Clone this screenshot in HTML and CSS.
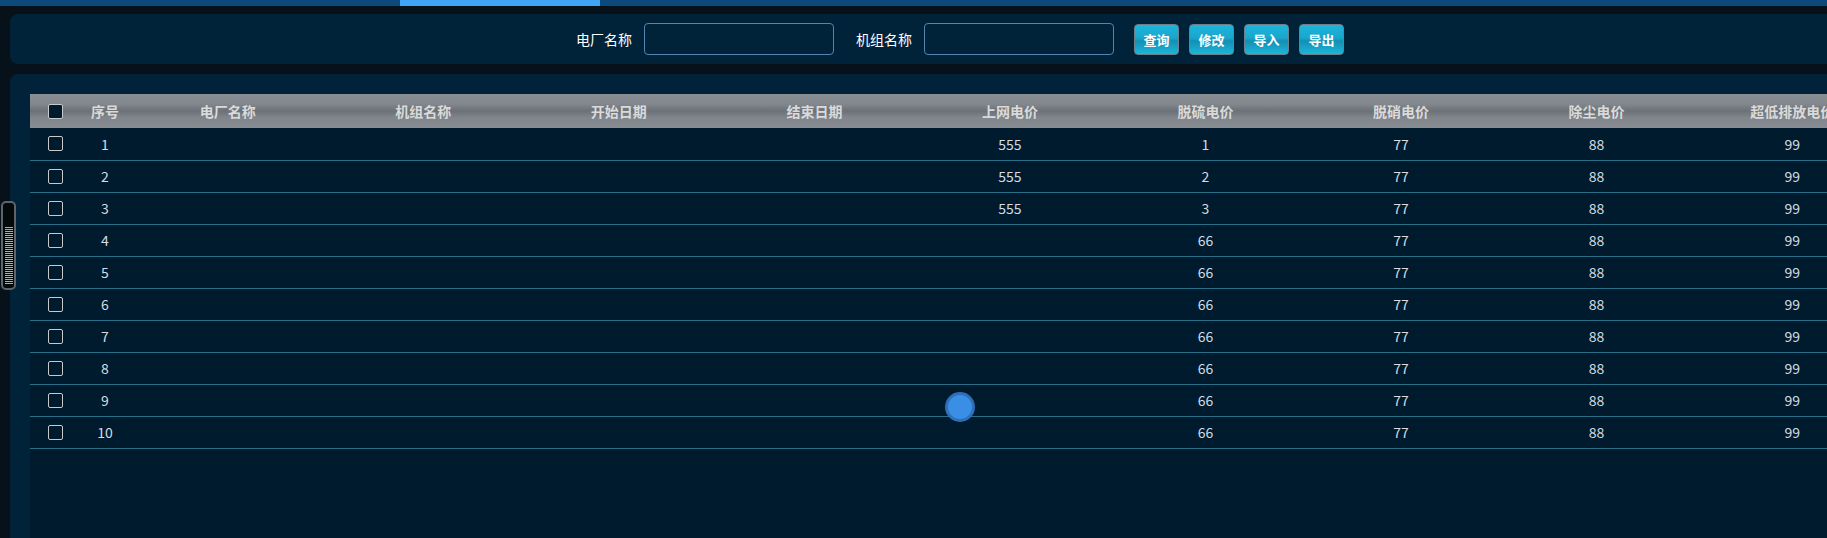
FILE: index.html
```html
<html>
    <head>
        <title>电价管理</title>
        <meta charset="utf-8">
        <link rel="stylesheet" href="styles.css">
    </head>
    <body>
        <!-- top tab indicator -->
        <div class="top-bar">
            <span class="seg"></span>
            <span class="seg active"></span>
        </div>

        <!-- search form -->
        <div class="panel search-panel">
            <label class="field-label">电厂名称</label>
            <input class="field-input" type="text">
            <label class="field-label second">机组名称</label>
            <input class="field-input" type="text">
            <div class="btns">
                <button class="btn">查询</button>
                <button class="btn">修改</button>
                <button class="btn">导入</button>
                <button class="btn">导出</button>
            </div>
        </div>

        <!-- price list -->
        <div class="panel table-panel">
            <div class="table-wrap">
                <table class="grid">
                    <colgroup>
                        <col class="c-check">
                        <col class="c-no">
                        <col span="9">
                    </colgroup>
                    <thead>
                        <tr>
                            <th><input class="chk chk-all" type="checkbox"></th>
                            <th>序号</th>
                            <th>电厂名称</th>
                            <th>机组名称</th>
                            <th>开始日期</th>
                            <th>结束日期</th>
                            <th>上网电价</th>
                            <th>脱硫电价</th>
                            <th>脱硝电价</th>
                            <th>除尘电价</th>
                            <th>超低排放电价</th>
                        </tr>
                    </thead>
                    <tbody>
                        <tr><td><input class="chk" type="checkbox"></td><td>1</td><td></td><td></td><td></td><td></td><td>555</td><td>1</td><td>77</td><td>88</td><td>99</td></tr>
                        <tr><td><input class="chk" type="checkbox"></td><td>2</td><td></td><td></td><td></td><td></td><td>555</td><td>2</td><td>77</td><td>88</td><td>99</td></tr>
                        <tr><td><input class="chk" type="checkbox"></td><td>3</td><td></td><td></td><td></td><td></td><td>555</td><td>3</td><td>77</td><td>88</td><td>99</td></tr>
                        <tr><td><input class="chk" type="checkbox"></td><td>4</td><td></td><td></td><td></td><td></td><td></td><td>66</td><td>77</td><td>88</td><td>99</td></tr>
                        <tr><td><input class="chk" type="checkbox"></td><td>5</td><td></td><td></td><td></td><td></td><td></td><td>66</td><td>77</td><td>88</td><td>99</td></tr>
                        <tr><td><input class="chk" type="checkbox"></td><td>6</td><td></td><td></td><td></td><td></td><td></td><td>66</td><td>77</td><td>88</td><td>99</td></tr>
                        <tr><td><input class="chk" type="checkbox"></td><td>7</td><td></td><td></td><td></td><td></td><td></td><td>66</td><td>77</td><td>88</td><td>99</td></tr>
                        <tr><td><input class="chk" type="checkbox"></td><td>8</td><td></td><td></td><td></td><td></td><td></td><td>66</td><td>77</td><td>88</td><td>99</td></tr>
                        <tr><td><input class="chk" type="checkbox"></td><td>9</td><td></td><td></td><td></td><td></td><td></td><td>66</td><td>77</td><td>88</td><td>99</td></tr>
                        <tr><td><input class="chk" type="checkbox"></td><td>10</td><td></td><td></td><td></td><td></td><td></td><td>66</td><td>77</td><td>88</td><td>99</td></tr>
                    </tbody>
                </table>
            </div>
        </div>

        <!-- floating widgets -->
        <div class="meter"><div class="meter-level"></div></div>
        <div class="float-dot"></div>
    </body>
</html>
```

FILE: styles.css
```css
html, body {
    overflow: hidden;
}

body {
    margin: 0;
    width: 1920px;
    height: 538px;
    background: #07111a;
    font-family: "Noto Sans CJK SC", "Noto Sans", sans-serif;
    font-size: 14px;
    color: #fff;
    position: relative;
}

.top-bar {
    display: flex;
    height: 6px;
    background: #0b4a7a;
}

.top-bar .seg {
    width: 400px;
}

.top-bar .seg.active {
    width: 200px;
    background: #40a5f7;
}

.panel {
    margin: 0 10px;
    background: #00233a;
    border-radius: 8px;
}

.search-panel {
    margin-top: 8px;
    height: 50px;
    display: flex;
    align-items: center;
    justify-content: center;
}

.field-label {
    color: #fff;
    font-size: 14px;
    margin-right: 12px;
}

.field-label.second {
    margin-left: 22px;
}

.field-input {
    width: 190px;
    height: 32px;
    box-sizing: border-box;
    background: #00233a;
    border: 1px solid #4f86b2;
    border-radius: 4px;
    color: #fff;
    outline: none;
}

.btns {
    display: flex;
    gap: 10px;
    margin-left: 20px;
}

.btn {
    width: 45px;
    height: 31px;
    padding: 0;
    border: 1px solid #6d7f8a;
    border-radius: 4px;
    background: linear-gradient(to bottom, #1cb6dc 0%, #1aa6cc 45%, #158fb2 55%, #1ab7dc 100%);
    color: #fff;
    font-family: "Noto Sans CJK SC", sans-serif;
    font-size: 13px;
    font-weight: bold;
    cursor: pointer;
}

.table-panel {
    margin-top: 10px;
    padding: 20px 20px 0;
    height: 480px;
}

.table-wrap {
    height: 460px;
    background: #001b2d;
}

.grid {
    width: 1860px;
    table-layout: fixed;
    border-collapse: collapse;
}

.grid col.c-check,
.grid col.c-no {
    width: 50px;
}

.grid th {
    height: 34px;
    padding: 0;
    background: linear-gradient(to bottom, #888e94 0%, #81878d 30%, #6b7176 50%, #80868c 70%, #878d93 100%);
    color: #dadada;
    font-weight: bold;
    font-size: 14px;
    text-align: center;
    white-space: nowrap;
    overflow: hidden;
}

.grid td {
    height: 32px;
    padding: 0;
    border-bottom: 1px solid #2a7089;
    color: #d3dde3;
    font-size: 14px;
    text-align: center;
}

.chk {
    -webkit-appearance: none;
    appearance: none;
    display: block;
    margin: 0 auto;
    width: 15px;
    height: 15px;
    box-sizing: border-box;
    border: 1.5px solid #c9c9c9;
    border-radius: 2px;
    background: transparent;
}

.chk-all {
    background: #001b2d;
}

.meter {
    position: absolute;
    left: 1px;
    top: 201px;
    width: 15px;
    height: 89px;
    box-sizing: border-box;
    border: 2px solid #5e6468;
    border-radius: 5px;
    background: #04090c;
}

.meter-level {
    position: absolute;
    left: 2px;
    right: 1px;
    bottom: 3px;
    height: 58px;
    background: repeating-linear-gradient(to bottom, #3ef064 0, #3ef064 1px, transparent 1px, transparent 2px);
}

.float-dot {
    position: absolute;
    left: 945px;
    top: 392px;
    width: 30px;
    height: 30px;
    box-sizing: border-box;
    border-radius: 50%;
    background: #3a8ee5;
    border: 3px solid #2e6fb8;
}
```
